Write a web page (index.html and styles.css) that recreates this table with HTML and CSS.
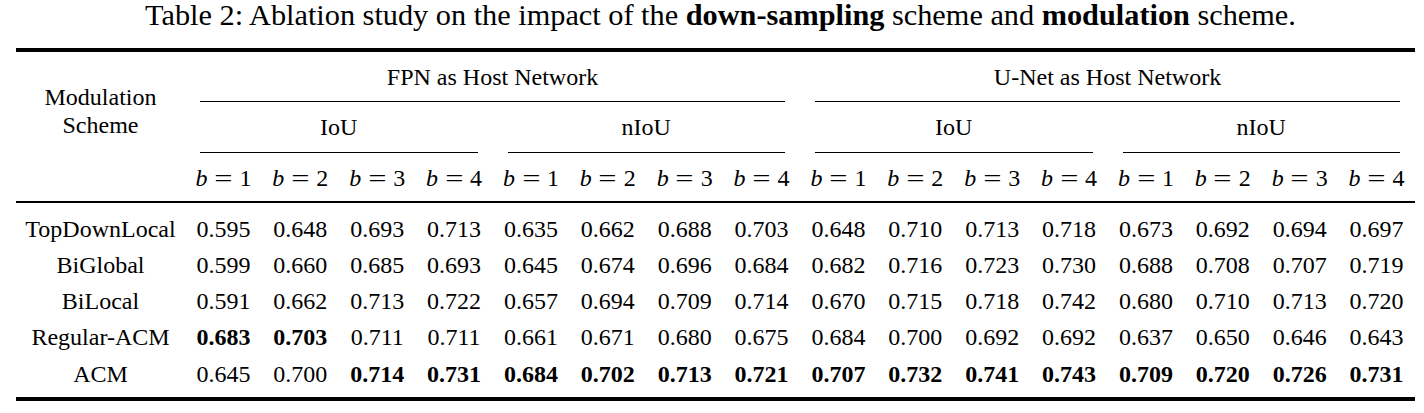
FILE: index.html
```html
<!DOCTYPE html>
<html lang="en">
<head>
<meta charset="utf-8">
<title>Table 2: Ablation study</title>
<link rel="stylesheet" href="styles.css">
</head>
<body>
<div class="page">
  <p class="caption">Table 2: Ablation study on the impact of the <b>down-sampling</b> scheme and <b>modulation</b> scheme.</p>
  <table class="results">
    <colgroup>
      <col class="c-label">
      <col span="16">
    </colgroup>
    <thead>
      <tr class="r-host">
        <th rowspan="3" class="label-head">Modulation<br>Scheme</th>
        <th colspan="8"><div class="grp">FPN as Host Network</div><div class="rule"></div></th>
        <th colspan="8"><div class="grp">U-Net as Host Network</div><div class="rule"></div></th>
      </tr>
      <tr class="r-metric">
        <th colspan="4"><div class="grp">IoU</div><div class="rule"></div></th>
        <th colspan="4"><div class="grp">nIoU</div><div class="rule"></div></th>
        <th colspan="4"><div class="grp">IoU</div><div class="rule"></div></th>
        <th colspan="4"><div class="grp">nIoU</div><div class="rule"></div></th>
      </tr>
      <tr class="r-b">
        <th><i>b</i><span class="eq">=</span>1</th><th><i>b</i><span class="eq">=</span>2</th><th><i>b</i><span class="eq">=</span>3</th><th><i>b</i><span class="eq">=</span>4</th>
        <th><i>b</i><span class="eq">=</span>1</th><th><i>b</i><span class="eq">=</span>2</th><th><i>b</i><span class="eq">=</span>3</th><th><i>b</i><span class="eq">=</span>4</th>
        <th><i>b</i><span class="eq">=</span>1</th><th><i>b</i><span class="eq">=</span>2</th><th><i>b</i><span class="eq">=</span>3</th><th><i>b</i><span class="eq">=</span>4</th>
        <th><i>b</i><span class="eq">=</span>1</th><th><i>b</i><span class="eq">=</span>2</th><th><i>b</i><span class="eq">=</span>3</th><th><i>b</i><span class="eq">=</span>4</th>
      </tr>
    </thead>
    <tbody>
      <tr class="first">
        <td>TopDownLocal</td>
        <td>0.595</td><td>0.648</td><td>0.693</td><td>0.713</td>
        <td>0.635</td><td>0.662</td><td>0.688</td><td>0.703</td>
        <td>0.648</td><td>0.710</td><td>0.713</td><td>0.718</td>
        <td>0.673</td><td>0.692</td><td>0.694</td><td>0.697</td>
      </tr>
      <tr>
        <td>BiGlobal</td>
        <td>0.599</td><td>0.660</td><td>0.685</td><td>0.693</td>
        <td>0.645</td><td>0.674</td><td>0.696</td><td>0.684</td>
        <td>0.682</td><td>0.716</td><td>0.723</td><td>0.730</td>
        <td>0.688</td><td>0.708</td><td>0.707</td><td>0.719</td>
      </tr>
      <tr>
        <td>BiLocal</td>
        <td>0.591</td><td>0.662</td><td>0.713</td><td>0.722</td>
        <td>0.657</td><td>0.694</td><td>0.709</td><td>0.714</td>
        <td>0.670</td><td>0.715</td><td>0.718</td><td>0.742</td>
        <td>0.680</td><td>0.710</td><td>0.713</td><td>0.720</td>
      </tr>
      <tr>
        <td>Regular-ACM</td>
        <td class="best">0.683</td><td class="best">0.703</td><td>0.711</td><td>0.711</td>
        <td>0.661</td><td>0.671</td><td>0.680</td><td>0.675</td>
        <td>0.684</td><td>0.700</td><td>0.692</td><td>0.692</td>
        <td>0.637</td><td>0.650</td><td>0.646</td><td>0.643</td>
      </tr>
      <tr class="last">
        <td>ACM</td>
        <td>0.645</td><td>0.700</td><td class="best">0.714</td><td class="best">0.731</td>
        <td class="best">0.684</td><td class="best">0.702</td><td class="best">0.713</td><td class="best">0.721</td>
        <td class="best">0.707</td><td class="best">0.732</td><td class="best">0.741</td><td class="best">0.743</td>
        <td class="best">0.709</td><td class="best">0.720</td><td class="best">0.726</td><td class="best">0.731</td>
      </tr>
    </tbody>
  </table>
</div>
</body>
</html>
```

FILE: styles.css
```css
html, body {
  margin: 0;
  padding: 0;
  background: #ffffff;
}

body {
  font-family: "Liberation Serif", "Times New Roman", serif;
  color: #000000;
}

.page {
  width: 1424px;
}

.caption {
  margin: 0 0 0 16px;
  width: 1399px;
  padding-left: 10px;
  box-sizing: border-box;
  text-align: center;
  font-size: 30.3px;
  line-height: 30px;
  white-space: nowrap;
}

.results {
  margin: 18px 0 0 16px;
  width: 1399px;
  table-layout: fixed;
  border-collapse: separate;
  border-spacing: 0;
  border-top: 4px solid #000;
  border-bottom: 4px solid #000;
  font-size: 24px;
}

.c-label {
  width: 169px;
}

.results th,
.results td {
  padding: 0;
  text-align: center;
  font-weight: normal;
  white-space: nowrap;
}

.grp {
  line-height: 28px;
}

.rule {
  height: 1px;
  background: #000;
  margin: 0 15px;
}

.r-host th .grp {
  padding-top: 11px;
  padding-bottom: 10px;
}

.r-metric th .grp {
  padding-top: 11px;
  padding-bottom: 11px;
}

.r-b th {
  padding-top: 11px;
  padding-bottom: 9px;
  line-height: 28px;
  border-bottom: 2px solid #000;
}

.results th.label-head {
  line-height: 28px;
  vertical-align: top;
  padding-top: 31px;
  border-bottom: 2px solid #000;
}

.eq {
  display: inline-block;
  width: 0.778em;
  margin: 0 0.278em;
  text-align: center;
  transform: scaleX(1.35);
}

.results tbody td {
  line-height: 36.25px;
}

.results tbody tr.first td {
  padding-top: 7.6px;
}

.results tbody tr.last td {
  padding-bottom: 5.2px;
}

.results td.best {
  font-weight: bold;
}
```
